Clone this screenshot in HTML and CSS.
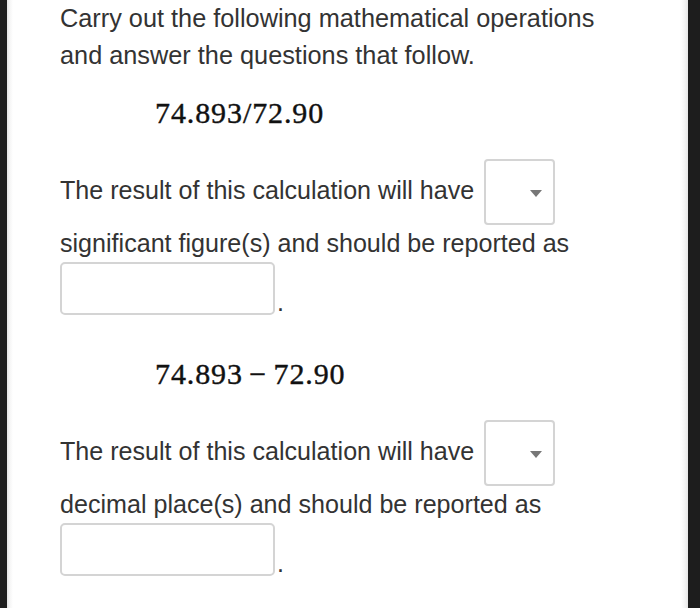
FILE: index.html
```html
<!DOCTYPE html>
<html lang="en">
<head>
<meta charset="utf-8">
<title>Significant figures</title>
<link rel="stylesheet" href="styles.css">
</head>
<body>
<div class="frame">
  <main class="sheet">
    <p class="intro">Carry out the following mathematical operations and answer the questions that follow.</p>

    <section class="problem">
      <div class="math">74.893/72.90</div>
      <div class="row ask">
        <span>The result of this calculation will have</span>
        <span class="select"><span class="caret"></span></span>
      </div>
      <div class="row">significant figure(s) and should be reported as</div>
      <div class="row answer">
        <span class="input"></span><span class="dot">.</span>
      </div>
    </section>

    <section class="problem second">
      <div class="math">74.893 &minus; 72.90</div>
      <div class="row ask">
        <span>The result of this calculation will have</span>
        <span class="select"><span class="caret"></span></span>
      </div>
      <div class="row">decimal place(s) and should be reported as</div>
      <div class="row answer">
        <span class="input"></span><span class="dot">.</span>
      </div>
    </section>
  </main>
</div>
</body>
</html>
```

FILE: styles.css
```css
html, body {
  margin: 0;
  padding: 0;
  height: 100%;
}

body {
  background: #1d1d1d;
  font-family: "Liberation Sans", Arial, Helvetica, sans-serif;
  color: #333;
}

.frame {
  display: flex;
  height: 608px;
  padding: 0 12px 0 7px;
}

.sheet {
  flex: 1;
  background: linear-gradient(to right, #e2e2e2 0, #f6f6f6 3px, #ffffff 6px, #ffffff calc(100% - 7px), #f4f4f4 calc(100% - 3px), #e6e6e6 100%);
  padding: 0 0 0 53px;
  overflow: hidden;
}

.intro {
  margin: 0;
  font-size: 25.3px;
  line-height: 37px;
  width: 570px;
}

.problem {
  margin-top: 19px;
}

.problem.second {
  margin-top: 39px;
}

.math {
  font-family: "Liberation Serif", "Times New Roman", serif;
  font-size: 30px;
  line-height: 40px;
  letter-spacing: 0.9px;
  word-spacing: -2px;
  color: #111;
  padding-left: 95px;
  -webkit-text-stroke: 0.4px #111;
}

.row {
  font-size: 25.1px;
  line-height: 37px;
  white-space: nowrap;
}

.ask {
  display: flex;
  align-items: center;
  margin-top: 26px;
}

.ask > span:first-child {
  position: relative;
  top: -2px;
}

.select {
  margin-left: 10px;
  width: 71px;
  height: 66px;
  box-sizing: border-box;
  border: 2px solid #d4d4d4;
  border-radius: 4px;
  display: flex;
  align-items: center;
  justify-content: flex-end;
  padding-right: 11px;
}

.caret {
  width: 0;
  height: 0;
  border-left: 6px solid transparent;
  border-right: 6px solid transparent;
  border-top: 7px solid #777;
  margin-top: 2px;
}

.answer {
  display: flex;
  align-items: flex-end;
}

.input {
  width: 215px;
  height: 53px;
  box-sizing: border-box;
  border: 2px solid #d4d4d4;
  border-radius: 5px;
}

.dot {
  line-height: 25px;
  margin-left: 2px;
}
```
